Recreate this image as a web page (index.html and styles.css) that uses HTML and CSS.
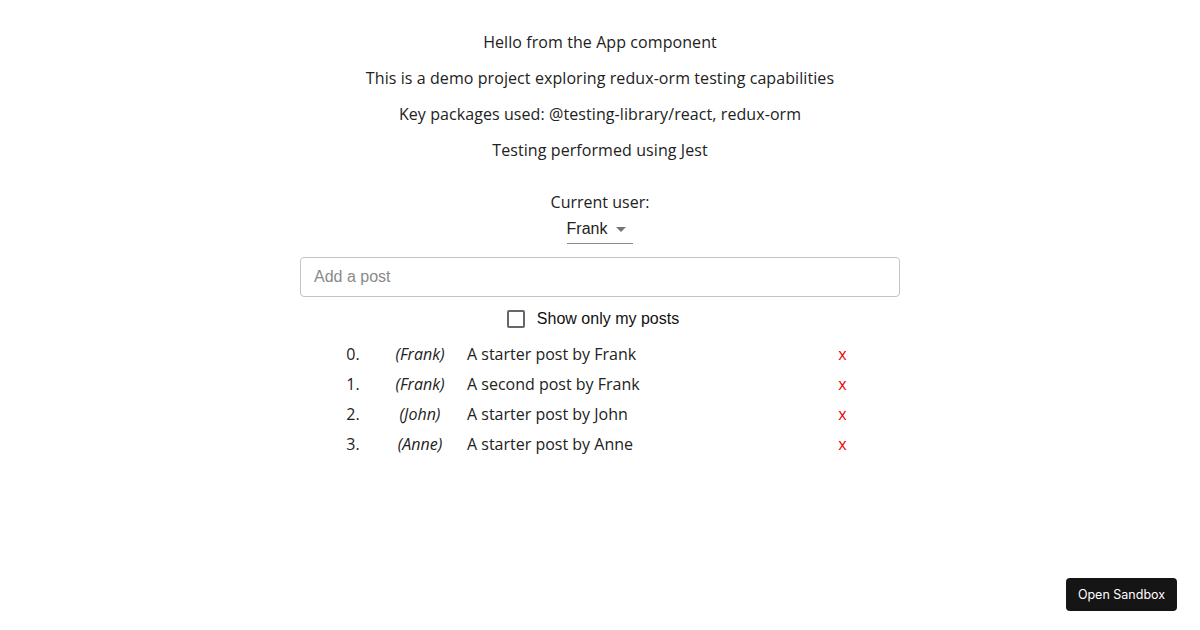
FILE: index.html
```html
<!DOCTYPE html>
<html>
<head>
<meta charset="utf-8">
<link rel="stylesheet" href="styles.css">
</head>
<body>
<div class="app">
  <p class="line">Hello from the App component</p>
  <p class="line">This is a demo project exploring redux-orm testing capabilities</p>
  <p class="line">Key packages used: @testing-library/react, redux-orm</p>
  <p class="line">Testing performed using Jest</p>

  <div class="user">
    <div class="user-label">Current user:</div>
    <div class="select">
      <span class="select-value">Frank</span>
      <svg class="select-arrow" width="24" height="24" viewBox="0 0 24 24"><path d="M7 10l5 5 5-5z" fill="#757575"/></svg>
    </div>
  </div>

  <div class="post-input">Add a post</div>

  <label class="check-row">
    <span class="checkbox"></span>
    <span class="check-label">Show only my posts</span>
  </label>

  <table class="posts">
    <tr><td class="num">0.</td><td class="author">(Frank)</td><td class="text">A starter post by Frank</td><td class="del">x</td></tr>
    <tr><td class="num">1.</td><td class="author">(Frank)</td><td class="text">A second post by Frank</td><td class="del">x</td></tr>
    <tr><td class="num">2.</td><td class="author">(John)</td><td class="text">A starter post by John</td><td class="del">x</td></tr>
    <tr><td class="num">3.</td><td class="author">(Anne)</td><td class="text">A starter post by Anne</td><td class="del">x</td></tr>
  </table>
</div>
<button class="sandbox">Open Sandbox</button>
</body>
</html>
```
FILE: styles.css
```css
html, body {
  margin: 0;
  padding: 0;
  background: #fff;
}
body {
  font-family: "Open Sans", "Noto Sans", sans-serif;
  color: #222;
  font-size: 16px;
}
.app {
  width: 600px;
  margin: 0 auto;
  padding-top: 32px;
  display: flex;
  flex-direction: column;
  align-items: center;
}
.line {
  margin: 0 0 16px;
  line-height: 20px;
  text-align: center;
  white-space: nowrap;
  letter-spacing: 0.08px;
}
.user {
  margin-top: 16px;
  display: flex;
  flex-direction: column;
  align-items: center;
}
.user-label {
  line-height: 20px;
}
.select {
  margin-top: 5px;
  display: flex;
  align-items: center;
  border-bottom: 1px solid #8a8a8a;
  height: 24px;
  padding: 0 0 2px;
  font-family: "Liberation Sans", Arial, sans-serif;
  font-size: 16px;
  color: #222;
}
.select-value {
  padding-right: 2px;
}
.select-arrow {
  display: block;
}
.post-input {
  box-sizing: border-box;
  width: 600px;
  height: 40px;
  margin-top: 13px;
  border: 1px solid #c4c4c4;
  border-radius: 4px;
  padding: 0 13px;
  display: flex;
  align-items: center;
  font-family: "Liberation Sans", Arial, sans-serif;
  font-size: 16px;
  color: #8a8a8a;
}
.check-row {
  margin-top: 12px;
  margin-right: 14px;
  display: flex;
  align-items: center;
  height: 20px;
  font-family: "Liberation Sans", Arial, sans-serif;
  font-size: 16px;
  color: #111;
}
.checkbox {
  box-sizing: border-box;
  width: 18px;
  height: 18px;
  border: 2px solid #666;
  border-radius: 2px;
  margin-right: 12px;
}
.posts {
  margin-top: 10px;
  margin-right: 7.5px;
  border-collapse: collapse;
}
.posts td {
  height: 30px;
  padding: 0;
  line-height: 20px;
}
.num {
  width: 50px;
  text-align: center;
}
.author {
  width: 84px;
  text-align: center;
  font-style: italic;
}
.text {
  width: 353.5px;
  padding-left: 5px !important;
}
.del {
  width: 44px;
  color: #e00;
  text-align: center;
}
.sandbox {
  position: fixed;
  right: 23px;
  bottom: 19px;
  width: 111px;
  height: 33px;
  border: none;
  border-radius: 4px;
  background: #151515;
  color: #fff;
  font-family: Inter, "Noto Sans", sans-serif;
  font-size: 12.5px;
  padding: 0;
}
```
